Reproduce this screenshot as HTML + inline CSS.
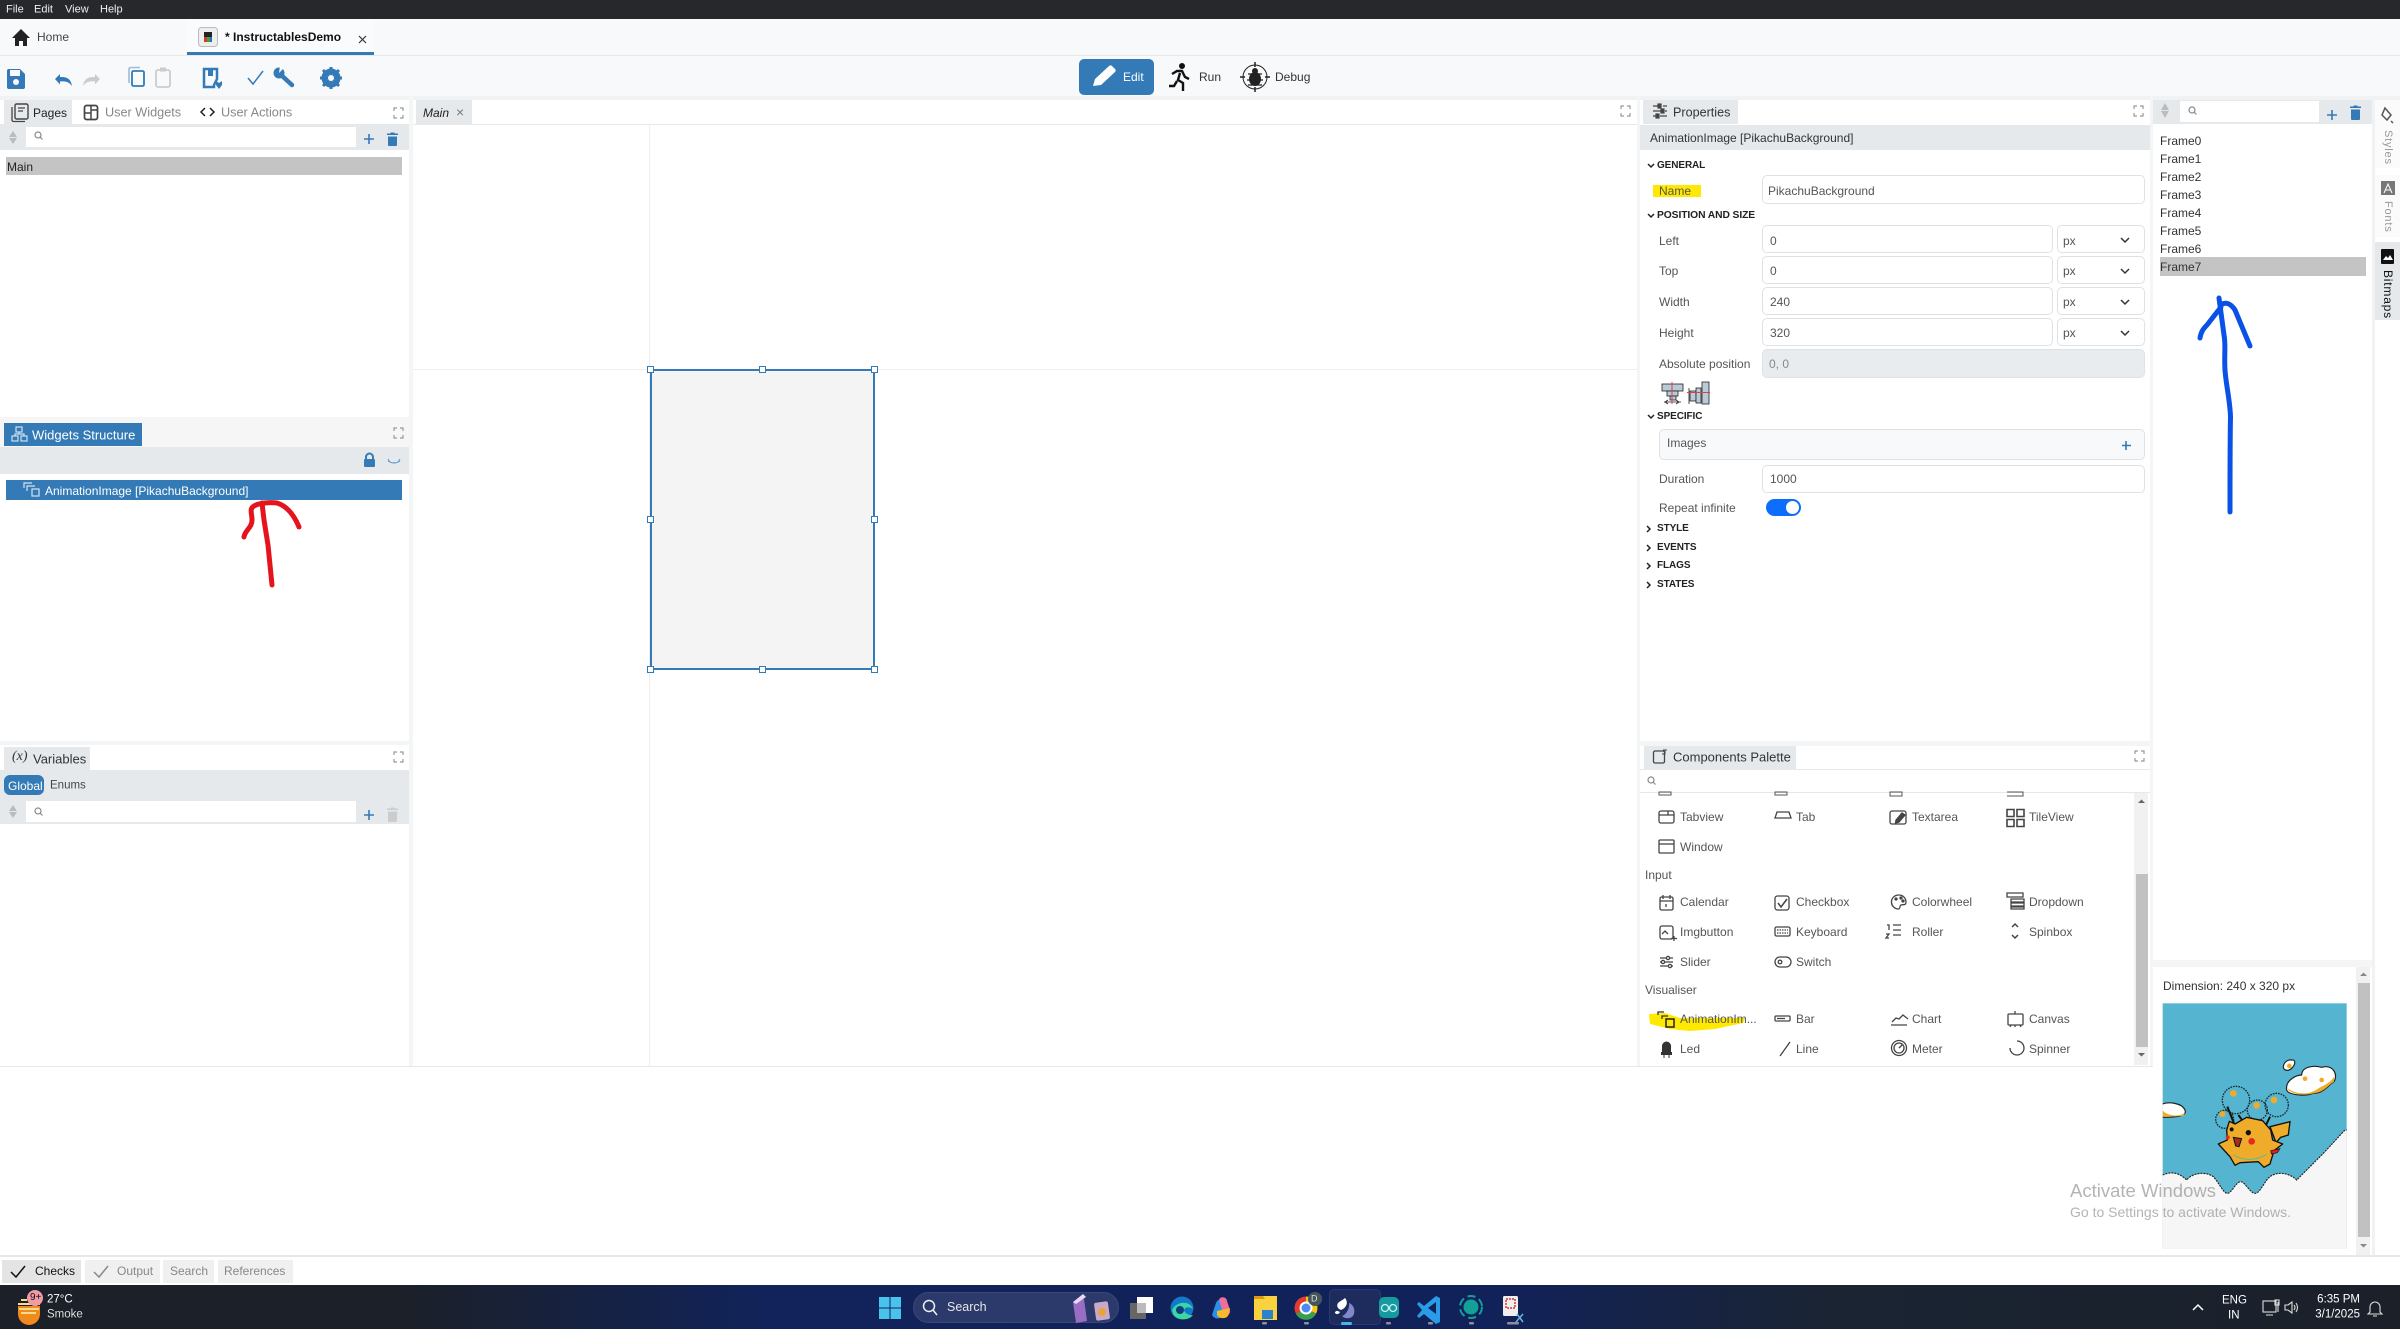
<!DOCTYPE html>
<html lang="en"><head><meta charset="utf-8"><title>InstructablesDemo</title>
<style>
html,body{margin:0;padding:0;width:2400px;height:1329px;overflow:hidden;background:#fff;font-family:"Liberation Sans",sans-serif;font-size:12px;color:#333}
.b{position:absolute}
.t{position:absolute;white-space:nowrap;line-height:1;transform:translateY(-50%);color:#333}
.i{position:absolute;background:#fff;border:1px solid #dee2e6;border-radius:5px;box-sizing:border-box}
.h{font-weight:bold;font-size:10px;letter-spacing:-.1px;color:#222;margin-top:1px}
.v{position:absolute;writing-mode:vertical-rl;white-space:nowrap;line-height:1;font-size:11px;letter-spacing:.8px;color:#999}
.g{color:#888}
.p{color:#555}
svg{position:absolute;left:0;top:0}
</style></head><body>
<!-- base regions -->
<div class="b" style="left:0;top:0;width:2400px;height:19px;background:#26282c"></div>
<div class="b" style="left:0;top:19px;width:2400px;height:78px;background:#f8f9fa"></div>
<div class="b" style="left:0;top:55px;width:2400px;height:1px;background:#e6e8ea"></div>
<div class="b" style="left:187px;top:19px;width:187px;height:36px;background:#fafbfc;border-bottom:3px solid #337ab7;box-sizing:border-box"></div>
<div class="b" style="left:1079px;top:59px;width:75px;height:36px;background:#337ab7;border-radius:5px"></div>
<div class="b" style="left:0;top:96px;width:2400px;height:4px;background:#f1f2f3"></div>
<div class="b" style="left:409px;top:96px;width:4px;height:970px;background:#f4f5f6"></div>
<div class="b" style="left:1637px;top:96px;width:3px;height:970px;background:#f4f5f6"></div>
<div class="b" style="left:2150px;top:96px;width:3px;height:970px;background:#f4f5f6"></div>
<div class="b" style="left:0;top:1066px;width:2153px;height:1px;background:#e8e8e8"></div>
<div class="b" style="left:2372px;top:96px;width:3px;height:1160px;background:#f1f2f3"></div>
<div class="b" style="left:2153px;top:960px;width:219px;height:7px;background:#f4f5f6"></div>
<div class="b" style="left:0;top:1255px;width:2400px;height:2px;background:#e8e8e8"></div>

<!-- left panels -->
<div class="b" style="left:4px;top:100px;width:68px;height:24px;background:#e6e9ec"></div>
<div class="b" style="left:0;top:124px;width:409px;height:26px;background:#e6e9ec"></div>
<div class="b" style="left:26px;top:127px;width:330px;height:20px;background:#fff"></div>
<div class="b" style="left:6px;top:157px;width:396px;height:18px;background:#c4c4c4"></div>
<div class="b" style="left:0;top:417px;width:409px;height:30px;background:#f6f6f6"></div>
<div class="b" style="left:4px;top:423px;width:138px;height:23px;background:#337ab7"></div>
<div class="b" style="left:0;top:447px;width:409px;height:27px;background:#e6e9ec"></div>
<div class="b" style="left:6px;top:480px;width:396px;height:20px;background:#337ab7"></div>
<div class="b" style="left:0;top:741px;width:409px;height:4px;background:#f4f5f6"></div>
<div class="b" style="left:4px;top:747px;width:86px;height:23px;background:#e6e9ec"></div>
<div class="b" style="left:0;top:770px;width:409px;height:54px;background:#e6e9ec"></div>
<div class="b" style="left:4px;top:775px;width:40px;height:20px;background:#337ab7;border-radius:6px"></div>
<div class="b" style="left:26px;top:801px;width:330px;height:21px;background:#fff"></div>

<!-- centre -->
<div class="b" style="left:413px;top:124px;width:1224px;height:1px;background:#e8e8e8"></div>
<div class="b" style="left:416px;top:100px;width:56px;height:24px;background:#e6e9ec"></div>
<div class="b" style="left:649px;top:125px;width:1px;height:941px;background:#eeeeee"></div>
<div class="b" style="left:413px;top:369px;width:1224px;height:1px;background:#eeeeee"></div>
<div class="b" style="left:650px;top:369px;width:225px;height:301px;background:#f4f4f4;border:2px solid #337ab7;border-radius:2px;box-sizing:border-box"></div>
<div class="b" style="left:647px;top:366px;width:7px;height:7px;background:#fff;border:1px solid #337ab7;box-sizing:border-box"></div>
<div class="b" style="left:759px;top:366px;width:7px;height:7px;background:#fff;border:1px solid #337ab7;box-sizing:border-box"></div>
<div class="b" style="left:871px;top:366px;width:7px;height:7px;background:#fff;border:1px solid #337ab7;box-sizing:border-box"></div>
<div class="b" style="left:647px;top:516px;width:7px;height:7px;background:#fff;border:1px solid #337ab7;box-sizing:border-box"></div>
<div class="b" style="left:871px;top:516px;width:7px;height:7px;background:#fff;border:1px solid #337ab7;box-sizing:border-box"></div>
<div class="b" style="left:647px;top:666px;width:7px;height:7px;background:#fff;border:1px solid #337ab7;box-sizing:border-box"></div>
<div class="b" style="left:759px;top:666px;width:7px;height:7px;background:#fff;border:1px solid #337ab7;box-sizing:border-box"></div>
<div class="b" style="left:871px;top:666px;width:7px;height:7px;background:#fff;border:1px solid #337ab7;box-sizing:border-box"></div>

<!-- properties -->
<div class="b" style="left:1643px;top:100px;width:95px;height:24px;background:#e6e9ec"></div>
<div class="b" style="left:1640px;top:125px;width:510px;height:25px;background:#e6e9ec"></div>
<div class="b" style="left:1653px;top:185px;width:48px;height:12px;background:#ffe900"></div>
<div class="i" style="left:1762px;top:175px;width:383px;height:29px"></div>
<div class="i" style="left:1762px;top:225px;width:291px;height:28px"></div><div class="i" style="left:2057px;top:225px;width:88px;height:28px"></div>
<div class="i" style="left:1762px;top:256px;width:291px;height:28px"></div><div class="i" style="left:2057px;top:256px;width:88px;height:28px"></div>
<div class="i" style="left:1762px;top:287px;width:291px;height:28px"></div><div class="i" style="left:2057px;top:287px;width:88px;height:28px"></div>
<div class="i" style="left:1762px;top:318px;width:291px;height:28px"></div><div class="i" style="left:2057px;top:318px;width:88px;height:28px"></div>
<div class="i" style="left:1762px;top:349px;width:383px;height:29px;background:#e9ecef"></div>
<div class="i" style="left:1659px;top:429px;width:486px;height:31px;background:#f8f9fa"></div>
<div class="i" style="left:1762px;top:465px;width:383px;height:28px"></div>
<div class="b" style="left:1766px;top:499px;width:35px;height:17px;background:#0d6efd;border-radius:9px"></div>
<div class="b" style="left:1786px;top:501px;width:13px;height:13px;background:#fff;border-radius:50%"></div>

<!-- palette -->
<div class="b" style="left:1640px;top:741px;width:510px;height:5px;background:#f4f5f6"></div>
<div class="b" style="left:1644px;top:746px;width:152px;height:23px;background:#e6e9ec"></div>
<div class="b" style="left:1640px;top:769px;width:510px;height:1px;background:#e6e8ea"></div>
<div class="b" style="left:1640px;top:792px;width:510px;height:1px;background:#e6e8ea"></div>
<div class="b" style="left:2134px;top:793px;width:14px;height:272px;background:#f1f1f1"></div>
<div class="b" style="left:2136px;top:874px;width:12px;height:173px;background:#c1c1c1"></div>

<!-- bitmaps -->
<div class="b" style="left:2153px;top:100px;width:219px;height:24px;background:#e6e9ec"></div>
<div class="b" style="left:2180px;top:101px;width:139px;height:21px;background:#fff"></div>
<div class="b" style="left:2160px;top:257px;width:206px;height:19px;background:#c4c4c4"></div>
<div class="b" style="left:2375px;top:100px;width:25px;height:68px;background:#fbfbfb"></div>
<div class="b" style="left:2375px;top:175px;width:25px;height:62px;background:#fbfbfb"></div>
<div class="b" style="left:2375px;top:242px;width:25px;height:78px;background:#e6e9ec"></div>
<div class="b" style="left:2356px;top:967px;width:14px;height:288px;background:#f1f1f1"></div>
<div class="b" style="left:2358px;top:983px;width:12px;height:254px;background:#c1c1c1"></div>

<!-- bottom tabs -->
<div class="b" style="left:2px;top:1260px;width:79px;height:23px;background:#e4e4e4"></div>
<div class="b" style="left:85px;top:1260px;width:75px;height:23px;background:#f0f0f0"></div>
<div class="b" style="left:163px;top:1260px;width:51px;height:23px;background:#f0f0f0"></div>
<div class="b" style="left:218px;top:1260px;width:75px;height:23px;background:#f0f0f0"></div>

<!-- taskbar -->
<div class="b" style="left:0;top:1285px;width:2400px;height:44px;background:linear-gradient(90deg,#1b2029 0,#1b2029 17%,#11235a 32%,#11225a 62%,#1a2433 76%,#1b2029 100%)"></div>
<div class="b" style="left:913px;top:1292px;width:206px;height:31px;background:#2b3a6b;border-radius:16px;border:1px solid #3a4877;box-sizing:border-box"></div>
<div class="b" style="left:1329px;top:1289px;width:52px;height:36px;background:#1d2c5c;border-radius:5px;border:1px solid #2b3a68;box-sizing:border-box"></div>

<svg width="2400" height="1329" viewBox="0 0 2400 1329">
<path d="M1649 1014 L1665 1013 L1680 1018 L1745 1018 L1743 1023 L1715 1029 L1690 1031 L1670 1029 L1650 1024Z" fill="#ffe900"/>
<!-- tab/home -->
<path d="M21 29 L12 38 H15 V46 H19 V41 H23 V46 H27 V38 H30Z" fill="#222"/>
<rect x="198.500" y="27.500" width="19" height="19" rx="3" fill="#eee" stroke="#bbb"/><rect x="204" y="32" width="8" height="10" fill="#222"/><rect x="204" y="37" width="3" height="5" fill="#d33"/><rect x="207" y="37" width="3" height="5" fill="#3a3"/><rect x="210" y="37" width="2" height="5" fill="#36c"/>
<path d="M359 36l7 7M366 36l-7 7" stroke="#333" stroke-width="1.200" fill="none"/>
<!-- toolbar -->
<path d="M8 69h12l5 5v13a2 2 0 0 1-2 2H9a2 2 0 0 1-2-2V71a2 2 0 0 1 1-2Z" fill="#337ab7"/><rect x="10" y="70" width="10" height="6" fill="#f8f9fa"/><circle cx="16" cy="82" r="3" fill="#f8f9fa"/>
<path d="M55 79l5-5v3c7-.500 11 2 12 9-3-4-6-5-12-4.500v3Z" fill="#337ab7"/>
<path d="M100 79l-5-5v3c-7-.500-11 2-12 9 3-4 6-5 12-4.500v3Z" fill="#ccc"/>
<rect x="132" y="71" width="12" height="15" rx="1.500" fill="none" stroke="#337ab7" stroke-width="1.800"/><path d="M129 83V69a1.500 1.500 0 0 1 1.500-1.500H140" fill="none" stroke="#9dbcd8" stroke-width="1.600"/>
<rect x="156" y="70" width="14" height="17" rx="2" fill="none" stroke="#ccc" stroke-width="1.800"/><rect x="160" y="67.500" width="6" height="4" fill="#ccc"/>
<path d="M204 69h13v10l-3 6v2h-10Z" fill="none" stroke="#337ab7" stroke-width="2.500"/><rect x="208" y="69" width="5" height="7" fill="#337ab7"/><path d="M216 81l3 2 3-2v4l-3 4-3-4Z" fill="#337ab7"/><path d="M204 70v17" stroke="#337ab7" stroke-width="2" stroke-dasharray="1.500 1.500"/>
<path d="M248 78l5 6 10-13" fill="none" stroke="#337ab7" stroke-width="1.500"/>
<circle cx="279" cy="73" r="5.500" fill="#337ab7"/><path d="M280 74L292 85" stroke="#337ab7" stroke-width="4.500" stroke-linecap="round"/><path d="M279 73l1-7 6 0Z" fill="#f8f9fa"/>
<circle cx="331" cy="78" r="7" fill="none" stroke="#337ab7" stroke-width="5"/><path d="M331 67v22M320 78h22M323 70l16 16M339 70l-16 16" stroke="#337ab7" stroke-width="3"/><circle cx="331" cy="78" r="3" fill="#f8f9fa"/>
<path d="M1093 86l2-7 14-13a2 2 0 0 1 3 0l3 3a2 2 0 0 1 0 3l-14 13Z" fill="#fff"/>
<!-- run -->
<circle cx="1182" cy="66" r="3" fill="#111"/><path d="M1172 74l5-3h5l3 6 4 2M1180 73l-2 7 5 3v8M1177 81l-3 5h-5" fill="none" stroke="#111" stroke-width="2.400"/>
<!-- debug -->
<circle cx="1255" cy="77" r="12" fill="none" stroke="#222" stroke-width="1"/><path d="M1255 62v5M1255 87v5M1240 77h5M1265 77h5" stroke="#222" stroke-width="1.500"/><ellipse cx="1255" cy="79" rx="6" ry="7" fill="#222"/><circle cx="1255" cy="71" r="3" fill="#222"/><path d="M1248 74l14 0M1247 80h16M1248 85l14 0" stroke="#222" stroke-width="1.200"/>
<!-- pages tab icons -->
<rect x="15" y="104" width="13" height="15" rx="1.500" fill="none" stroke="#444" stroke-width="1.400"/><path d="M18 108h7M18 111h5M12 107v13a1.500 1.500 0 0 0 1.500 1.500H25" fill="none" stroke="#444" stroke-width="1.300"/>
<rect x="84.500" y="105.500" width="13" height="14" rx="2" fill="none" stroke="#444" stroke-width="1.700"/><path d="M91 106v13M91 110h6M85 113h6" stroke="#444" stroke-width="1.500"/>
<path d="M205 108l-4 4 4 4M210 108l4 4-4 4" fill="none" stroke="#222" stroke-width="1.500"/>
<!-- expand icons -->
<path d="M394 111v-3h3M400 108h3v3M403 115v3h-3M397 118h-3v-3M1621 109v-3h3M1627 106h3v3M1630 113v3h-3M1624 116h-3v-3M2134 109v-3h3M2140 106h3v3M2143 113v3h-3M2137 116h-3v-3M394 431v-3h3M400 428h3v3M403 435v3h-3M397 438h-3v-3M394 755v-3h3M400 752h3v3M403 759v3h-3M397 762h-3v-3M2135 754v-3h3M2141 751h3v3M2144 758v3h-3M2138 761h-3v-3" fill="none" stroke="#999" stroke-width="1.200"/>
<!-- sort arrows -->
<path d="M9 137l4-6 4 6ZM9 138l4 6 4-6Z" fill="#bbb"/>
<path d="M9 811l4-6 4 6ZM9 812l4 6 4-6Z" fill="#bbb"/><path d="M2161 110l4-7 4 7ZM2161 111l4 7 4-7Z" fill="#bbb"/>
<!-- search glyphs -->
<g fill="none" stroke="#888" stroke-width="1.200"><circle cx="38" cy="135" r="3"/><path d="M40 137l2.500 2.500"/><circle cx="38" cy="811" r="3"/><path d="M40 813l2.500 2.500"/><circle cx="2192" cy="110" r="3"/><path d="M2194 112l2.500 2.500"/><circle cx="1651" cy="780" r="3"/><path d="M1653 782l2.500 2.500"/></g>
<!-- plus/trash -->
<path d="M369 134v10M364 139h10M369 810v10M364 815h10M2332 110v10M2327 115h10M2126 441v9M2122 445.500h9" stroke="#337ab7" stroke-width="1.600"/>
<path d="M387 135h11v-1.500h-3l-1-1h-3l-1 1h-3ZM388 136.500h9V145a1 1 0 0 1-1 1h-7a1 1 0 0 1-1-1Z" fill="#337ab7"/>
<path d="M387 810h11v-1.500h-3l-1-1h-3l-1 1h-3ZM388 811.500h9V821a1 1 0 0 1-1 1h-7a1 1 0 0 1-1-1Z" fill="#ccc"/>
<path d="M2350 108h11v-1.500h-3l-1-1h-3l-1 1h-3ZM2351 109.500h9V119a1 1 0 0 1-1 1h-7a1 1 0 0 1-1-1Z" fill="#337ab7"/>
<!-- widgets structure -->
<g fill="none" stroke="#cfe0ef" stroke-width="1.200"><rect x="16" y="427" width="6" height="5"/><rect x="12" y="436" width="6" height="5"/><rect x="21" y="436" width="6" height="5"/><path d="M19 432v2M15 436v-2h9v2"/></g>
<path d="M366 460v-3a3.500 3.500 0 0 1 7 0v3" fill="none" stroke="#337ab7" stroke-width="2"/><rect x="364" y="459" width="11" height="8" rx="1" fill="#337ab7"/>
<path d="M388 461q6 4 12 0M388 459l2 3M400 459l-2 3M394 463v-1" fill="none" stroke="#5c9ad0" stroke-width="1"/>
<g fill="none" stroke="#d6e4f0" stroke-width="1.200"><path d="M24 488v-5h8M27 491v-5h8"/><rect x="32" y="489" width="7" height="7"/></g>
<!-- red arrow -->
<g fill="none" stroke="#e5141c" stroke-width="5" stroke-linecap="round" stroke-linejoin="round"><path d="M272 585L268 545L264 520L262 503"/><path d="M244 537C245 530 252 528 252 520C252 513 249 509 254 506C259 503 270 502 277 503C287 506 294 515 299 527"/></g>
<!-- blue arrow -->
<g fill="none" stroke="#0a52e6" stroke-width="5" stroke-linecap="round" stroke-linejoin="round"><path d="M2230 512C2230 470 2230 440 2230.500 417C2230 400 2226 385 2225 370C2224 355 2226 345 2224 335L2219 298"/><path d="M2200 338C2201 332 2203 329 2207 325L2221 307"/><path d="M2222 304C2227 302 2231 304 2235 310L2250 346"/></g>
<!-- props icons -->
<g stroke="#444" stroke-width="1.200" fill="none" transform="translate(5 0)"><path d="M1648 106h5M1658 106h4M1648 111h8M1660 111h2M1648 116h3M1655 116h7"/><rect x="1653" y="104" width="3" height="4" fill="#444"/><rect x="1656" y="109" width="3" height="4" fill="#444"/><rect x="1651" y="114" width="3" height="4" fill="#444"/></g>
<g fill="none" stroke="#222" stroke-width="1.500"><path d="M1648 164l3 3 3-3M1648 214l3 3 3-3M1648 415l3 3 3-3M1647 526l3 3-3 3M1647 545l3 3-3 3M1647 563l3 3-3 3M1647 582l3 3-3 3"/></g>
<path d="M2121 238l4 4 4-4M2121 269l4 4 4-4M2121 300l4 4 4-4M2121 331l4 4 4-4" fill="none" stroke="#333" stroke-width="1.500"/>
<!-- align icons -->
<g stroke="#222" fill="#b9cad9" stroke-width=".8"><rect x="1662" y="384" width="21" height="7"/><rect x="1667" y="391" width="11" height="5"/><rect x="1670" y="396" width="6" height="4"/><path d="M1664 402h17M1668 400l-3 2 3 2M1676 400l3 2-3 2" fill="none"/><rect x="1690" y="391" width="6" height="10"/><rect x="1696" y="388" width="5" height="15"/><rect x="1702" y="382" width="7" height="22"/><path d="M1689 388v16" fill="none"/></g>
<path d="M1672 382v22M1687 392.500h23" stroke="#d8404a" stroke-width="1"/>
<!-- palette icons -->
<g fill="none" stroke="#444" stroke-width="1.300"><rect x="1653.500" y="751" width="11" height="12" rx="1.500"/><path d="M1662 754h3v-4M1663 750h4" stroke-width="1"/>
<rect x="1659" y="811" width="15" height="12" rx="2"/><path d="M1659 815h15M1668 811v4"/>
<path d="M1775 818l2-6h12l2 6Z"/>
<rect x="1890" y="811" width="16" height="13" rx="2"/><path d="M1896 820l6-7 3 2-6 7-3.500 1Z" fill="#444"/>
<path d="M2007 809.500h7v7h-7ZM2017 809.500h7v7h-7ZM2007 819.500h7v7h-7ZM2017 819.500h7v7h-7Z" stroke-width="1.600"/>
<rect x="1659" y="840" width="15" height="13" rx="1"/><path d="M1659 844h15"/>
<rect x="1660" y="897" width="13" height="13" rx="1.500"/><path d="M1660 901h13M1663 895v4M1670 895v4M1666 904v3"/>
<rect x="1775" y="896" width="14" height="14" rx="2.500"/><path d="M1778 903l3 4 6-8" stroke-width="1.500"/>
<path d="M1899 895a7 7 0 1 0-1 14c3 0 1-3 3-4s5 1 5-3a7 7 0 0 0-7-7Z"/><circle cx="1896" cy="899" r="1" fill="#444"/><circle cx="1901" cy="898" r="1" fill="#444"/><circle cx="1903" cy="901" r="1" fill="#444"/>
<path d="M2007 893h16v4h-16ZM2011 899h13v3h-13ZM2011 903h13v3h-13ZM2011 907h13v2h-13Z"/>
<rect x="1660" y="926" width="13" height="13" rx="2"/><path d="M1662 934l3-3 3 3M1674 936v5M1671 938.500h6"/>
<rect x="1775" y="927" width="15" height="9" rx="1.500"/><path d="M1777 930h11M1777 933h11" stroke-dasharray="1.500 1"/>
<path d="M1893 925h8M1893 930h8M1893 935h8M1887 925h2v5M1886 934h3l-3 4h3"/>
<path d="M2012 927l3-3 3 3M2012 935l3 3 3-3" stroke-width="1.500"/>
<path d="M1660 958h13M1660 962h13M1660 966h13"/><circle cx="1668" cy="958" r="1.600" fill="#fff"/><circle cx="1663" cy="962" r="1.600" fill="#fff"/><circle cx="1670" cy="966" r="1.600" fill="#fff"/>
<rect x="1775" y="957" width="16" height="10" rx="5"/><circle cx="1780" cy="962" r="1.800"/>
<path d="M1658 1015v-3h6M1662 1019v-3h6" stroke="#333"/><rect x="1666" y="1019" width="8" height="8" stroke="#222" stroke-width="1.500"/>
<rect x="1775" y="1016" width="15" height="5" rx="1"/><path d="M1777 1018.500h8"/>
<path d="M1892 1022l4-4 3 1 4-4 5 4M1891 1025h16"/>
<rect x="2008" y="1014" width="15" height="11" rx="1"/><path d="M2015 1011v3M2011 1025l-1 2M2015 1025v2M2020 1025l1 2"/>
<path d="M1790 1042l-10 14"/>
<circle cx="1899" cy="1048" r="7.500"/><circle cx="1899" cy="1048" r="5"/><path d="M1899 1048l3-3"/>
<path d="M2017 1041a7 7 0 1 1-7 7"/>
</g>
<path d="M1662 1054v-8a4.500 4.500 0 0 1 9 0v8ZM1661 1052h11v3h-11Z" fill="#333"/><path d="M1664 1055v3M1669 1055v3" stroke="#333"/>
<path d="M2138 803l3.500-3.500 3.500 3.500ZM2138 1053l3.500 3.500 3.500-3.500Z" fill="#666"/>
<path d="M2360 976l3.500-3.500 3.500 3.500ZM2360 1244l3.500 3.500 3.500-3.500Z" fill="#888"/>
<!-- vertical tab icons -->
<path d="M2385 108l6 7-4 5-5-5ZM2391 121l2 2" fill="none" stroke="#555" stroke-width="1.500"/>
<rect x="2381" y="181" width="14" height="14" fill="#777"/><path d="M2384 193l4-9 4 9M2385 190h6" stroke="#fff" fill="none"/>
<rect x="2381" y="249" width="13" height="15" rx="1" fill="#111"/><path d="M2383 260l3-4 2 2 2-3 3 5" fill="#fff"/>
<!-- check icons bottom -->
<path d="M11 1272l5 5 9-11" fill="none" stroke="#111" stroke-width="1.500"/><path d="M94 1272l5 5 9-11" fill="none" stroke="#888" stroke-width="1.500"/>
<!-- bitmap preview -->
<svg x="2150" y="960" width="250" height="300" viewBox="0 0 750 900">
<rect x="38" y="130" width="552" height="735" fill="#55b5d0"/>
<path d="M38 645C60 635 85 635 110 660C125 640 165 632 190 650C205 665 220 700 232 700C245 700 258 665 272 665C285 665 300 700 316 700C330 700 345 660 360 650C385 632 420 640 440 660C460 640 490 610 510 590C540 560 565 530 585 510L590 510V865H38Z" fill="#f6f6f6"/>
<path d="M38 645C60 635 85 635 110 660C125 640 165 632 190 650C205 665 220 700 232 700C245 700 258 665 272 665C285 665 300 700 316 700C330 700 345 660 360 650C385 632 420 640 440 660C460 640 490 610 510 590C540 560 565 530 585 510L590 510" fill="none" stroke="#222" stroke-width="3.500" stroke-dasharray="6 3"/>
<path d="M38 432C55 425 95 428 105 450C112 470 75 472 38 472" fill="#fff" stroke="#222" stroke-width="3.500"/>
<g fill="#fff" stroke="#222" stroke-width="3.500">
<path d="M410 390C405 360 440 345 455 345C455 320 490 315 515 322C550 312 565 345 552 365C530 380 520 400 490 400C465 410 415 405 410 390Z"/>
<path d="M400 320C402 305 415 298 425 300C437 298 438 312 425 325C415 335 400 332 400 320Z"/>
</g>
<g fill="#efab2a"><path d="M38 452C55 470 90 470 105 458L100 468L60 470L38 470Z"/><path d="M413 385C440 405 480 405 505 385C525 375 545 365 552 350L552 365C530 380 520 398 490 400C465 408 418 403 413 385Z"/><circle cx="465" cy="356" r="7"/><circle cx="515" cy="360" r="7"/><circle cx="418" cy="318" r="7"/></g>
<g fill="none" stroke="#1a2a30" stroke-width="4" stroke-dasharray="5 3"><circle cx="258" cy="420" r="41"/><circle cx="322" cy="450" r="30"/><circle cx="380" cy="435" r="35"/><circle cx="224" cy="478" r="27"/></g>
<g fill="#efab2a"><circle cx="250" cy="400" r="10"/><circle cx="320" cy="436" r="10"/><circle cx="372" cy="420" r="10"/><circle cx="217" cy="462" r="9"/></g>
<path d="M232 440l20 50M265 465l15 20M360 470l-12 25" stroke="#111" stroke-width="6" fill="none"/>
<path d="M360 500L420 485L415 525L392 532L378 548Z" fill="#efab2a" stroke="#111" stroke-width="4"/>
<path d="M230 510L238 484L255 492L290 472L338 482L362 510L368 540L398 552L372 572L360 612L342 622L325 605L270 608L255 616L240 590L205 552L232 540Z" fill="#efab2a" stroke="#111" stroke-width="4" stroke-linejoin="round"/>
<circle cx="295" cy="518" r="8" fill="#111"/><circle cx="245" cy="508" r="6" fill="#111"/><circle cx="305" cy="544" r="10" fill="#e62a22"/><circle cx="233" cy="532" r="6" fill="#e62a22"/>
<path d="M250 532l25 4-8 24-10-2Z" fill="#a82c1c" stroke="#111" stroke-width="3"/>
<path d="M250 585q50 28 100 -2" fill="none" stroke="#5eb7a0" stroke-width="3"/>
<path d="M362 572l28-6-8 12-18 4Z" fill="#e01f22" stroke="#111" stroke-width="2"/>
</svg>
<!-- taskbar icons -->
<g fill="#49c3ee"><rect x="879" y="1297" width="10.500" height="10.500"/><rect x="890.500" y="1297" width="10.500" height="10.500"/><rect x="879" y="1308.500" width="10.500" height="10.500"/><rect x="890.500" y="1308.500" width="10.500" height="10.500"/></g>
<circle cx="929" cy="1306" r="5.500" fill="none" stroke="#f0f0f0" stroke-width="1.500"/><path d="M933 1310l4 5" stroke="#f0f0f0" stroke-width="1.500"/>
<path d="M1073 1302l11-3 3 22-11 2Z" fill="#9a6dc4"/><path d="M1073 1302l10-8 3 3-10 7Z" fill="#e8d8f5"/><rect x="1095" y="1302" width="14" height="18" rx="2" fill="#c9a9c6" transform="rotate(-8 1102 1311)"/><circle cx="1102" cy="1312" r="4" fill="#e6a43a"/>
<rect x="1130" y="1303" width="16" height="16" fill="#666"/><rect x="1137" y="1297" width="16" height="16" fill="#fff"/><rect x="1137" y="1303" width="9" height="10" fill="#bbb"/>
<circle cx="1182" cy="1308" r="11.500" fill="#1278c9"/><path d="M1172 1310c4-9 18-10 21-1-4-3-8-2-9 1 0 3 6 6 9 5-4 6-16 6-20-1Z" fill="#3cd6a2"/><circle cx="1180" cy="1310" r="4" fill="#0d3d83"/>
<path d="M1216 1303c2-5 8-5 10-1l-4 14c-2 4-8 3-10-1Z" fill="#2a8fe6"/><path d="M1220 1298c3-2 7 0 7 3l3 9c1 4-3 7-6 6l-5-16Z" fill="#ef6f9c"/><path d="M1217 1311l13-3-2 8c-2 3-9 3-11-1Z" fill="#f7b82a"/>
<rect x="1254" y="1296" width="23" height="24" fill="#f9d23f"/><path d="M1254 1296h9l2 3h-11Z" fill="#d89b13"/><rect x="1262" y="1310" width="11" height="9" fill="#2a83cc"/>
<circle cx="1306" cy="1308" r="11.500" fill="#e33b2e"/><path d="M1306 1296.500a11.500 11.500 0 0 1 10 17l-10-5.500Z" fill="#f5c518"/><path d="M1296 1314a11.500 11.500 0 0 0 20 0l-10-5.500Z" fill="#37a04f"/><circle cx="1306" cy="1308" r="5.500" fill="#4c8cf0" stroke="#fff" stroke-width="2"/>
<circle cx="1315" cy="1299" r="7" fill="#46575c"/>
<path d="M1345 1298c4 5 1 10-4 12-3-1-5-4-3-7 2-2 5-3 7-5Z" fill="#fff"/><path d="M1349 1303c5 2 7 8 4 13-3 3-8 3-11 0 4-1 8-8 7-13Z" fill="#8187c9"/><path d="M1335 1312c2-2 3-1 5 0-1 2-3 3-5 1Z" fill="#fff"/>
<rect x="1379" y="1297" width="20" height="21" rx="5" fill="#159aa0"/><circle cx="1385" cy="1308" r="3.500" fill="none" stroke="#cfeeee" stroke-width="1.300"/><circle cx="1393" cy="1308" r="3.500" fill="none" stroke="#cfeeee" stroke-width="1.300"/>
<path d="M1436 1296l-12 10-5-4-2 2 5 6-5 6 2 2 5-4 12 10 4-2v-24Zm0 6v12l-8-6Z" fill="#2a9be6"/>
<circle cx="1471" cy="1307" r="7.500" fill="#12a097"/><circle cx="1471" cy="1307" r="11" fill="none" stroke="#12a097" stroke-width="2" stroke-dasharray="8 4"/>
<rect x="1503" y="1296" width="15" height="20" rx="1.500" fill="#eee"/><rect x="1506" y="1299" width="9" height="9" fill="none" stroke="#d33" stroke-width="1.500" stroke-dasharray="2 1"/><path d="M1516 1322l7-8M1523 1322l-6-8" stroke="#6bb5dc" stroke-width="1.500"/>
<g fill="#8c8f98"><rect x="1262" y="1322" width="5" height="2.500" rx="1"/><rect x="1304" y="1322" width="5" height="2.500" rx="1"/><rect x="1386" y="1322" width="5" height="2.500" rx="1"/><rect x="1428" y="1322" width="5" height="2.500" rx="1"/><rect x="1469" y="1322" width="5" height="2.500" rx="1"/><rect x="1507" y="1322" width="12" height="2.500" rx="1"/></g>
<rect x="1341" y="1322" width="11" height="3" rx="1.500" fill="#45b5ef"/>
<!-- weather -->
<path d="M18 1306h22v8a11 11 0 0 1-22 0Z" fill="#f08a1c"/><path d="M21 1300h6M18 1304h22M19 1309h20M21 1313h15" stroke="#f7dc8c" stroke-width="2"/>
<circle cx="35" cy="1298" r="8" fill="#f29aa5"/>
<!-- tray -->
<path d="M2193 1310l5-5 5 5" fill="none" stroke="#fff" stroke-width="1.500"/>
<g fill="none" stroke="#ddd" stroke-width="1.100"><rect x="2263" y="1301" width="13" height="11"/><path d="M2266 1315h7M2278 1302v10"/><rect x="2275" y="1300" width="4" height="5"/><path d="M2285 1305h3l4-3v11l-4-3h-3ZM2294 1305q2 2.500 0 5M2296 1303q3 4.500 0 9"/><path d="M2370 1312v-5a5 5 0 0 1 10 0v5l2 2h-14ZM2373 1316h4"/></g>
<path d="M1659 792h12v3h-12ZM1775 792h12v3h-12ZM1890 792h12v4h-12ZM2007 792h16v4h-16" fill="none" stroke="#555"/>
</svg>

<!-- text -->
<div class="t" style="left:6px;top:10px;font-size:11px;color:#eee">File</div>
<div class="t" style="left:34px;top:10px;font-size:11px;color:#eee">Edit</div>
<div class="t" style="left:65px;top:10px;font-size:11px;color:#eee">View</div>
<div class="t" style="left:100px;top:10px;font-size:11px;color:#eee">Help</div>
<div class="t" style="left:37px;top:37px;color:#444">Home</div>
<div class="t" style="left:225px;top:37px;font-weight:bold;color:#111">* InstructablesDemo</div>
<div class="t" style="left:1123px;top:77px;color:#fff">Edit</div>
<div class="t" style="left:1199px;top:77px;color:#333">Run</div>
<div class="t" style="left:1275px;top:77px;color:#333">Debug</div>
<div class="t" style="left:33px;top:113px;color:#222">Pages</div>
<div class="t" style="left:105px;top:113px;font-size:12.700px;color:#888">User Widgets</div>
<div class="t" style="left:221px;top:113px;font-size:12.700px;color:#888">User Actions</div>
<div class="t" style="left:7px;top:167px;color:#222">Main</div>
<div class="t" style="left:423px;top:113px;font-style:italic;color:#222">Main</div>
<div class="t" style="left:456px;top:112px;font-size:14px;color:#777">×</div>
<div class="t" style="left:32px;top:435px;font-size:13px;color:#fff">Widgets Structure</div>
<div class="t" style="left:45px;top:491px;color:#fff">AnimationImage [PikachuBackground]</div>
<div class="t" style="left:12px;top:757px;font-size:14px;font-family:'Liberation Serif',serif;font-style:italic;color:#333">(x)</div>
<div class="t" style="left:33px;top:759px;font-size:13px;color:#333">Variables</div>
<div class="t" style="left:8px;top:786px;color:#fff">Global</div>
<div class="t" style="left:50px;top:786px;font-size:11.500px;color:#444">Enums</div>

<div class="t" style="left:1673px;top:113px;font-size:12.600px;color:#333">Properties</div>
<div class="t" style="left:1650px;top:138px;color:#333">AnimationImage [PikachuBackground]</div>
<div class="t h" style="left:1657px;top:165px">GENERAL</div>
<div class="t p" style="left:1659px;top:191px">Name</div>
<div class="t p" style="left:1768px;top:191px">PikachuBackground</div>
<div class="t h" style="left:1657px;top:215px;font-size:10.300px">POSITION AND SIZE</div>
<div class="t p" style="left:1659px;top:241px">Left</div><div class="t p" style="left:1770px;top:241px">0</div><div class="t p" style="left:2063px;top:241px">px</div>
<div class="t p" style="left:1659px;top:271px">Top</div><div class="t p" style="left:1770px;top:271px">0</div><div class="t p" style="left:2063px;top:271px">px</div>
<div class="t p" style="left:1659px;top:302px">Width</div><div class="t p" style="left:1770px;top:302px">240</div><div class="t p" style="left:2063px;top:302px">px</div>
<div class="t p" style="left:1659px;top:333px">Height</div><div class="t p" style="left:1770px;top:333px">320</div><div class="t p" style="left:2063px;top:333px">px</div>
<div class="t p" style="left:1659px;top:364px">Absolute position</div><div class="t g" style="left:1769px;top:364px">0, 0</div>
<div class="t h" style="left:1657px;top:416px">SPECIFIC</div>
<div class="t p" style="left:1667px;top:443px">Images</div>
<div class="t p" style="left:1659px;top:479px">Duration</div><div class="t p" style="left:1770px;top:479px">1000</div>
<div class="t p" style="left:1659px;top:508px">Repeat infinite</div>
<div class="t h" style="left:1657px;top:528px">STYLE</div>
<div class="t h" style="left:1657px;top:547px">EVENTS</div>
<div class="t h" style="left:1657px;top:565px">FLAGS</div>
<div class="t h" style="left:1657px;top:584px">STATES</div>

<div class="t" style="left:1673px;top:757px;font-size:13px;color:#333">Components Palette</div>
<div class="t p" style="left:1680px;top:817px">Tabview</div><div class="t p" style="left:1796px;top:817px">Tab</div><div class="t p" style="left:1912px;top:817px">Textarea</div><div class="t p" style="left:2029px;top:817px">TileView</div>
<div class="t p" style="left:1680px;top:847px">Window</div>
<div class="t p" style="left:1645px;top:875px">Input</div>
<div class="t p" style="left:1680px;top:902px">Calendar</div><div class="t p" style="left:1796px;top:902px">Checkbox</div><div class="t p" style="left:1912px;top:902px">Colorwheel</div><div class="t p" style="left:2029px;top:902px">Dropdown</div>
<div class="t p" style="left:1680px;top:932px">Imgbutton</div><div class="t p" style="left:1796px;top:932px">Keyboard</div><div class="t p" style="left:1912px;top:932px">Roller</div><div class="t p" style="left:2029px;top:932px">Spinbox</div>
<div class="t p" style="left:1680px;top:962px">Slider</div><div class="t p" style="left:1796px;top:962px">Switch</div>
<div class="t p" style="left:1645px;top:990px">Visualiser</div>
<div class="t p" style="left:1680px;top:1019px">AnimationIm...</div><div class="t p" style="left:1796px;top:1019px">Bar</div><div class="t p" style="left:1912px;top:1019px">Chart</div><div class="t p" style="left:2029px;top:1019px">Canvas</div>
<div class="t p" style="left:1680px;top:1049px">Led</div><div class="t p" style="left:1796px;top:1049px">Line</div><div class="t p" style="left:1912px;top:1049px">Meter</div><div class="t p" style="left:2029px;top:1049px">Spinner</div>

<div class="t" style="left:2160px;top:141px">Frame0</div>
<div class="t" style="left:2160px;top:159px">Frame1</div>
<div class="t" style="left:2160px;top:177px">Frame2</div>
<div class="t" style="left:2160px;top:195px">Frame3</div>
<div class="t" style="left:2160px;top:213px">Frame4</div>
<div class="t" style="left:2160px;top:231px">Frame5</div>
<div class="t" style="left:2160px;top:249px">Frame6</div>
<div class="t" style="left:2160px;top:267px">Frame7</div>
<div class="v" style="left:2382px;top:130px">Styles</div>
<div class="v" style="left:2382px;top:201px">Fonts</div>
<div class="v" style="left:2382px;top:270px;font-size:12px;color:#111">Bitmaps</div>
<div class="t" style="left:2163px;top:986px;color:#333">Dimension: 240 x 320 px</div>
<div class="t" style="left:2070px;top:1191px;font-size:18.500px;color:rgba(130,130,130,.6)">Activate Windows</div>
<div class="t" style="left:2070px;top:1212px;font-size:14px;color:rgba(130,130,130,.6)">Go to Settings to activate Windows.</div>

<div class="t" style="left:35px;top:1271px;color:#111">Checks</div>
<div class="t g" style="left:117px;top:1271px">Output</div>
<div class="t g" style="left:170px;top:1271px">Search</div>
<div class="t g" style="left:224px;top:1271px">References</div>

<div class="t" style="left:30px;top:1298px;font-size:10px;color:#111">9+</div>
<div class="t" style="left:47px;top:1300px;font-size:11.500px;color:#fff">27°C</div>
<div class="t" style="left:47px;top:1315px;font-size:11.500px;color:#ddd">Smoke</div>
<div class="t" style="left:947px;top:1307px;font-size:12.500px;color:#e6e6e6">Search</div>
<div class="t" style="left:1311px;top:1299px;font-size:9px;color:#ddd">D</div>
<div class="t" style="left:2222px;top:1301px;font-size:11.500px;color:#fff">ENG</div>
<div class="t" style="left:2228px;top:1316px;font-size:11.500px;color:#fff">IN</div>
<div class="t" style="right:40px;top:1300px;font-size:11.500px;color:#fff">6:35 PM</div>
<div class="t" style="right:40px;top:1315px;font-size:11.500px;color:#fff">3/1/2025</div>
</body></html>
